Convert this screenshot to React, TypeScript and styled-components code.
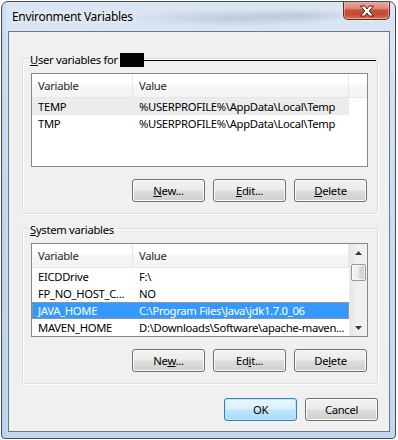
import React from "react";
import styled, { createGlobalStyle, css } from "styled-components";

const Global = createGlobalStyle`
  html, body { margin: 0; padding: 0; background: #ffffff; }
  body {
    font-family: "Noto Sans", "Liberation Sans", sans-serif;
    font-size: 11.25px;
    letter-spacing: -0.3px;
    color: #000;
  }
  * { box-sizing: border-box; }
`;

const Window = styled.div`
  margin: 1px 0 0 1px;
  width: 395px;
  height: 438px;
  border: 1px solid #434d59;
  border-radius: 7px 7px 4px 4px;
  background:
    linear-gradient(90deg, rgba(150, 190, 230, 0.35) 0px, rgba(150, 190, 230, 0) 6px),
    linear-gradient(180deg, #dbe6f3 0%, #cfdef0 40%, #c4d8ef 100%);
  display: flex;
  flex-direction: column;
  padding-bottom: 6px;
  overflow: hidden;
`;

const TitleBar = styled.div`
  height: 29px;
  display: flex;
  align-items: flex-start;
  justify-content: space-between;
  padding-left: 10px;
  background:
    radial-gradient(ellipse 110px 9px at 235px 16px, rgba(110, 130, 160, 0.28), rgba(110, 130, 160, 0) 100%),
    radial-gradient(ellipse 60px 7px at 300px 13px, rgba(110, 130, 160, 0.2), rgba(110, 130, 160, 0) 100%);
`;

const Title = styled.div`
  line-height: 30px;
  font-size: 12px;
  letter-spacing: -0.3px;
  color: #000;
  text-shadow: 0 0 6px rgba(255, 255, 255, 0.9);
`;

const CloseButton = styled.div`
  width: 47px;
  height: 19px;
  margin-top: -1px;
  margin-right: 5px;
  border: 1px solid #6e2b22;
  border-top: none;
  border-radius: 0 0 5px 5px;
  background: linear-gradient(
    180deg,
    #eab0a4 0%,
    #dc8a79 40%,
    #c8503a 52%,
    #c34a33 75%,
    #d7765a 100%
  );
  box-shadow: inset 0 0 0 1px rgba(255, 220, 210, 0.45);
  display: flex;
  align-items: center;
  justify-content: center;
  padding-top: 1px;
`;

const Client = styled.div`
  margin: 0 5px 0 6px;
  height: 401px;
  border: 1px solid #6a7888;
  background: #f0f0f0;
  padding: 26px 11px 0 13px;
  display: flex;
  flex-direction: column;
`;

const GroupBox = styled.div<{ $gap?: number }>`
  position: relative;
  margin-top: ${(p) => p.$gap ?? 0}px;
  border: 1px solid #d5dfe5;
  border-radius: 3px;
  box-shadow: inset 1px 1px 0 #ffffff, 1px 1px 0 #ffffff;
  padding: 14px 9px 11px 8px;
  display: flex;
  flex-direction: column;
`;

const Legend = styled.div<{ $stretch?: boolean }>`
  position: absolute;
  top: -7px;
  left: 5px;
  right: ${(p) => (p.$stretch ? "1px" : "auto")};
  height: 15px;
  display: flex;
  align-items: center;
`;

const LegendText = styled.span`
  background: #f0f0f0;
  padding: 0 2px;
  line-height: 15px;
`;

const Redacted = styled.span`
  width: 24px;
  height: 14px;
  background: #000;
  flex: none;
`;

const RedactLine = styled.span`
  flex: 1;
  height: 1px;
  margin-top: 1px;
  background: #000;
`;

const List = styled.div`
  height: 94px;
  border: 1px solid #828790;
  background: #ffffff;
  display: flex;
  overflow: hidden;
`;

const ListBody = styled.div`
  flex: 1;
  display: flex;
  flex-direction: column;
  min-width: 0;
`;

const Header = styled.div`
  height: 24px;
  display: grid;
  grid-template-columns: 101px 216px 1fr;
  background: linear-gradient(180deg, #ffffff 0%, #ffffff 45%, #f6f7f8 46%, #f2f3f5 100%);
  border-bottom: 1px solid #e4e6e9;
  flex: none;
`;

const HeaderCell = styled.div<{ $last?: boolean }>`
  padding-left: 6px;
  line-height: 23px;
  color: #2a2a2a;
  border-right: ${(p) => (p.$last ? "none" : "1px solid #e3e5e8")};
  white-space: nowrap;
  overflow: hidden;
`;

const Row = styled.div<{ $state?: "selected" | "inactive" }>`
  width: 317px;
  height: 17px;
  display: grid;
  grid-template-columns: 101px 216px;
  flex: none;
  ${(p) =>
    p.$state === "selected" &&
    css`
      background: #3399ff;
      color: #ffffff;
      outline: 1px dotted #e8903a;
      outline-offset: -1px;
    `}
  ${(p) =>
    p.$state === "inactive" &&
    css`
      background: #ececec;
    `}
`;

const Cell = styled.div`
  padding-left: 6px;
  line-height: 17px;
  white-space: nowrap;
  overflow: hidden;
`;

const ScrollBar = styled.div`
  width: 18px;
  flex: none;
  display: flex;
  flex-direction: column;
  background: linear-gradient(90deg, #e6e6e6 0%, #f0f0f0 40%, #f0f0f0 100%);
  border-left: 1px solid #ececec;
`;

const ScrollArrow = styled.div`
  height: 17px;
  display: flex;
  align-items: center;
  justify-content: center;
  flex: none;
`;

const ScrollTrack = styled.div`
  flex: 1;
  padding: 3px 1px 0 1px;
`;

const Thumb = styled.div`
  height: 17px;
  border: 1px solid #979797;
  border-radius: 2px;
  background: linear-gradient(90deg, #f4f4f4 0%, #ececec 50%, #dcdcdc 51%, #d0d0d0 100%);
  box-shadow: inset 0 0 0 1px rgba(255, 255, 255, 0.7);
`;

const ButtonRow = styled.div<{ $gap: number; $right: number }>`
  margin-top: ${(p) => p.$gap}px;
  padding-right: ${(p) => p.$right}px;
  display: flex;
  justify-content: flex-end;
  gap: 8px;
`;

const Button = styled.div<{ $default?: boolean }>`
  width: 73px;
  height: 23px;
  border: 1px solid #707070;
  border-radius: 3px;
  background: linear-gradient(180deg, #f2f2f2 0%, #ebebeb 48%, #dddddd 52%, #cfcfcf 100%);
  box-shadow: inset 0 0 0 1px #fbfbfb;
  display: flex;
  align-items: center;
  justify-content: center;
  line-height: 21px;
  color: #000;
  ${(p) =>
    p.$default &&
    css`
      border-color: #3c7fb1;
      background: linear-gradient(180deg, #eaf6fd 0%, #d9f0fc 48%, #bee6fd 52%, #a7d9f5 100%);
      box-shadow: inset 0 0 0 1px #bde4f7;
    `}
`;

const Key = styled.u`
  text-underline-offset: 1px;
`;

const CloseGlyph = () => (
  <svg width="16" height="12" viewBox="0 0 16 12">
    <polygon
      points="1.5,1 5.8,1 8,4 10.2,1 14.5,1 10.3,6 14.5,11 10.2,11 8,8 5.8,11 1.5,11 5.7,6"
      fill="#ffffff"
      stroke="#4a1d16"
      strokeWidth="1"
      strokeLinejoin="round"
    />
  </svg>
);

const UpArrow = () => (
  <svg width="7" height="4" viewBox="0 0 7 4">
    <polygon points="0,4 7,4 3.5,0" fill="#3a3a3a" />
  </svg>
);

const DownArrow = () => (
  <svg width="7" height="4" viewBox="0 0 7 4">
    <polygon points="0,0 7,0 3.5,4" fill="#3a3a3a" />
  </svg>
);

type Item = { name: string; value: string; state?: "selected" | "inactive" };

const userVars: Item[] = [
  { name: "TEMP", value: "%USERPROFILE%\\AppData\\Local\\Temp", state: "inactive" },
  { name: "TMP", value: "%USERPROFILE%\\AppData\\Local\\Temp" },
];

const systemVars: Item[] = [
  { name: "EICDDrive", value: "F:\\" },
  { name: "FP_NO_HOST_C...", value: "NO" },
  { name: "JAVA_HOME", value: "C:\\Program Files\\Java\\jdk1.7.0_06", state: "selected" },
  { name: "MAVEN_HOME", value: "D:\\Downloads\\Software\\apache-maven..." },
];

const VarList = ({ items, scroll }: { items: Item[]; scroll?: boolean }) => (
  <List>
    <ListBody>
      <Header>
        <HeaderCell>Variable</HeaderCell>
        <HeaderCell>Value</HeaderCell>
        <HeaderCell $last />
      </Header>
      {items.map((it) => (
        <Row key={it.name} $state={it.state}>
          <Cell>{it.name}</Cell>
          <Cell>{it.value}</Cell>
        </Row>
      ))}
    </ListBody>
    {scroll && (
      <ScrollBar>
        <ScrollArrow>
          <UpArrow />
        </ScrollArrow>
        <ScrollTrack>
          <Thumb />
        </ScrollTrack>
        <ScrollArrow>
          <DownArrow />
        </ScrollArrow>
      </ScrollBar>
    )}
  </List>
);

export default function App() {
  return (
    <>
      <Global />
      <Window>
        <TitleBar>
          <Title>Environment Variables</Title>
          <CloseButton>
            <CloseGlyph />
          </CloseButton>
        </TitleBar>
        <Client>
          <GroupBox>
            <Legend $stretch>
              <LegendText>
                <Key>U</Key>ser variables for
              </LegendText>
              <Redacted />
              <RedactLine />
            </Legend>
            <VarList items={userVars} />
            <ButtonRow $gap={12} $right={1}>
              <Button>
                <span>
                  <Key>N</Key>ew...
                </span>
              </Button>
              <Button>
                <span>
                  <Key>E</Key>dit...
                </span>
              </Button>
              <Button>
                <span>
                  <Key>D</Key>elete
                </span>
              </Button>
            </ButtonRow>
          </GroupBox>
          <GroupBox $gap={14}>
            <Legend>
              <LegendText>
                <Key>S</Key>ystem variables
              </LegendText>
            </Legend>
            <VarList items={systemVars} scroll />
            <ButtonRow $gap={12} $right={1}>
              <Button>
                <span>
                  Ne<Key>w</Key>...
                </span>
              </Button>
              <Button>
                <span>
                  Ed<Key>i</Key>t...
                </span>
              </Button>
              <Button>
                <span>
                  De<Key>l</Key>ete
                </span>
              </Button>
            </ButtonRow>
          </GroupBox>
          <ButtonRow $gap={14} $right={0}>
            <Button $default>OK</Button>
            <Button>Cancel</Button>
          </ButtonRow>
        </Client>
      </Window>
    </>
  );
}
